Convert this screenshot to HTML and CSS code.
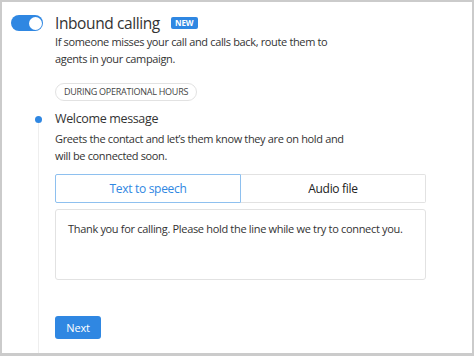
FILE: index.html
```html
<!DOCTYPE html>
<html lang="en">
<head>
    <meta charset="utf-8">
    <link rel="stylesheet" href="styles.css">
</head>
<body>
    <div class="frame">
        <div class="header">
            <span class="toggle on"><span class="knob"></span></span>
            <div class="header-body">
                <h1 class="title">Inbound calling <span class="badge">NEW</span></h1>
                <p class="desc">If someone misses your call and calls back, route them to agents in your campaign.</p>
                <span class="pill">DURING OPERATIONAL HOURS</span>
            </div>
        </div>

        <section class="step">
            <h2 class="step-title">Welcome message</h2>
            <p class="desc">Greets the contact and let’s them know they are on hold and will be connected soon.</p>

            <div class="tabs">
                <button class="tab active">Text to speech</button>
                <button class="tab">Audio file</button>
            </div>

            <div class="message">Thank you for calling. Please hold the line while we try to connect you.</div>

            <button class="next-btn">Next</button>
        </section>
    </div>
</body>
</html>
```

FILE: styles.css
```css
:root {
    --blue: #2f87e2;
    --text: #333333;
    --border: #e2e2e2;
}

* {
    margin: 0;
    padding: 0;
    box-sizing: border-box;
    font-family: 'Open Sans', sans-serif;
}

body {
    background: #ffffff;
    color: var(--text);
}

.frame {
    width: 474px;
    height: 356px;
    border: 2px solid #cbcbcb;
    border-bottom-width: 3px;
    overflow: hidden;
}

/* header with toggle */
.header {
    display: flex;
    gap: 12px;
    padding: 11px 0 0 9px;
}

.toggle {
    flex: none;
    width: 32px;
    height: 16px;
    margin-top: 2px;
    border-radius: 8px;
    background: #ccc;
    display: flex;
    align-items: center;
    padding: 0 1.5px;
}

.toggle.on {
    background: var(--blue);
    justify-content: flex-end;
}

.knob {
    width: 13px;
    height: 13px;
    border-radius: 50%;
    background: #fff;
}

.title {
    font-size: 15.5px;
    font-weight: 400;
    letter-spacing: -0.4px;
    line-height: 20px;
    display: flex;
    align-items: center;
    gap: 11px;
}

.badge {
    background: var(--blue);
    color: #fff;
    font-size: 8px;
    font-weight: 700;
    letter-spacing: 0;
    line-height: 12px;
    padding: 0 4px;
    border-radius: 2px;
}

.desc {
    font-size: 11px;
    letter-spacing: -0.35px;
    line-height: 17px;
    margin-top: 0;
    max-width: 285px;
}

.pill {
    display: inline-block;
    margin-top: 16px;
    border: 1px solid var(--border);
    border-radius: 10px;
    font-size: 9px;
    letter-spacing: -0.25px;
    line-height: 16px;
    padding: 0 8px;
    color: #444;
}

/* timeline step */
.step {
    position: relative;
    margin: 9px 0 0 36px;
    padding-left: 17px;
    height: 260px;
}

.step::before {
    content: '';
    position: absolute;
    left: 0;
    top: 10px;
    bottom: 0;
    width: 1px;
    background: #eeeeee;
}

.step::after {
    content: '';
    position: absolute;
    left: -3px;
    top: 6px;
    width: 7px;
    height: 7px;
    border-radius: 50%;
    background: var(--blue);
}

.step-title {
    font-size: 12.5px;
    font-weight: 400;
    letter-spacing: -0.35px;
    line-height: 18px;
}

.step .desc {
    margin-top: 2px;
    max-width: 292px;
}

.tabs {
    display: flex;
    width: 371px;
    margin-top: 10px;
}

.tab {
    flex: 1;
    height: 29px;
    background: #fff;
    border: 1px solid var(--border);
    font-size: 12px;
    letter-spacing: -0.3px;
    color: var(--text);
}

.tab:first-child {
    border-radius: 2px 0 0 2px;
}

.tab:last-child {
    border-left: none;
    border-radius: 0 2px 2px 0;
    font-weight: 500;
    color: #222;
}

.tab.active {
    border-color: #8ec0ef;
    color: var(--blue);
}

.message {
    width: 371px;
    height: 71px;
    margin-top: 6px;
    border: 1px solid var(--border);
    border-radius: 3px;
    padding: 10px 12px;
    font-size: 11px;
    letter-spacing: -0.32px;
    line-height: 17px;
}

.next-btn {
    display: block;
    margin-top: 36px;
    width: 46px;
    height: 23px;
    background: var(--blue);
    color: #fff;
    border: none;
    border-radius: 3px;
    font-size: 11px;
    letter-spacing: -0.2px;
}
```
